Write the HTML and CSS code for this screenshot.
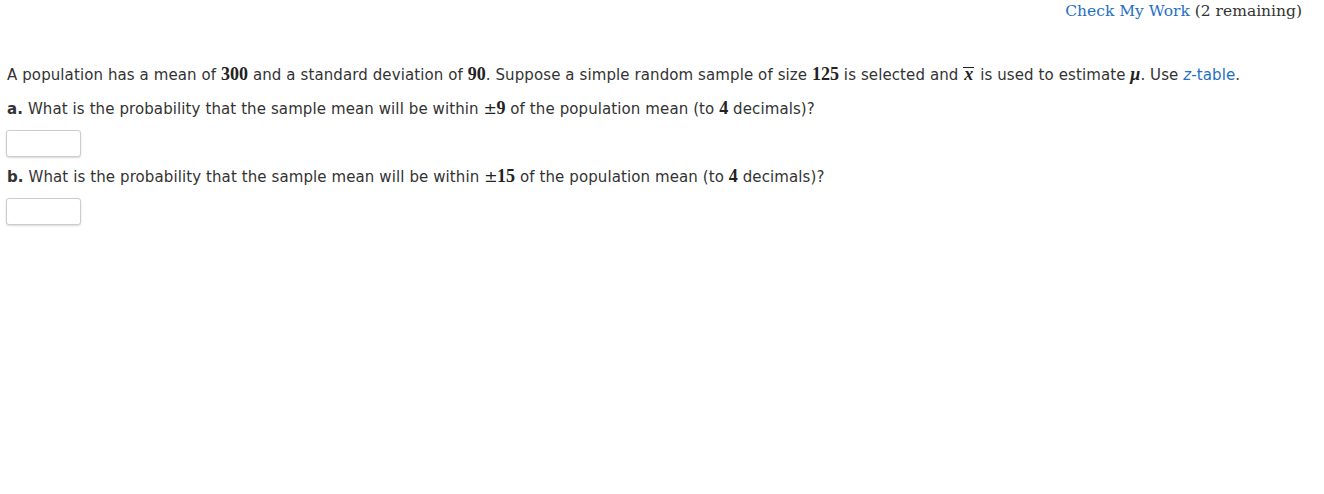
FILE: index.html
```html
<!DOCTYPE html>
<html>
<head>
<meta charset="utf-8">
<link rel="stylesheet" href="styles.css">
</head>
<body>
<div class="topbar">
  <a class="check" href="#">Check My Work</a> <span class="remaining">(2 remaining)</span>
</div>
<div class="question">
  <p class="line first">A population has a mean of <span class="m">300</span> and a standard deviation of <span class="m">90</span>. Suppose a simple random sample of size <span class="m">125</span> is selected and <span class="m xbar"><i>x</i></span> is used to estimate <span class="m mu">μ</span>. Use <a class="link" href="#"><i>z</i>-table</a>.</p>
  <p class="line"><b>a.</b> What is the probability that the sample mean will be within <span class="m"><span class="pm">±</span>9</span> of the population mean (to <span class="m">4</span> decimals)?</p>
  <div class="answer"><input class="box" type="text"></div>
  <p class="line"><b>b.</b> What is the probability that the sample mean will be within <span class="m"><span class="pm">±</span>15</span> of the population mean (to <span class="m">4</span> decimals)?</p>
  <div class="answer"><input class="box" type="text"></div>
</div>
</body>
</html>
```
FILE: styles.css
```css
html, body {
  margin: 0;
  padding: 0;
  background: #fff;
}
body {
  font-family: Verdana, "DejaVu Sans", sans-serif;
  font-size: 15px;
  letter-spacing: 0.1px;
  color: #333;
}
.topbar {
  display: flex;
  justify-content: flex-end;
  align-items: baseline;
  gap: 5px;
  padding: 0 22px 0 0;
  height: 24px;
  font-family: Georgia, "DejaVu Serif", serif;
  font-size: 15.5px;
  letter-spacing: 0;
  line-height: 22px;
}
.check {
  color: #1f6fc5;
  text-decoration: none;
}
.remaining {
  color: #333;
}
.question {
  padding: 39px 7px 0 7px;
}
.line {
  margin: 0;
  line-height: 24px;
  padding: 0;
}
.line + .line {
  margin-top: 10px;
}
.m {
  font-family: "Liberation Serif", serif;
  font-weight: bold;
  font-size: 18px;
  line-height: 1;
  letter-spacing: 0;
  color: #222;
}
.pm {
  font-family: "DejaVu Sans", sans-serif;
  font-weight: normal;
  font-size: 16px;
  letter-spacing: -0.5px;
}
.xbar {
  display: inline-block;
  line-height: 10px;
  border-top: 1.5px solid #222;
  padding: 1px 1px 0 1px;
  margin-right: 1px;
}
.mu {
  font-style: italic;
}
.link {
  color: #1f6fc5;
  text-decoration: none;
}
.answer {
  padding: 9px 0 8px 0;
}
.box {
  display: block;
  width: 75px;
  height: 27px;
  box-sizing: border-box;
  margin: 0 0 0 -1px;
  border: 1px solid #ccc;
  border-radius: 3px;
  box-shadow: 0 1px 2px rgba(0,0,0,0.15);
  background: #fff;
}
```
